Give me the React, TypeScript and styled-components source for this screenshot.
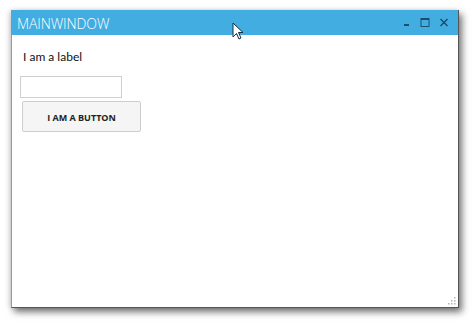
import styled, { createGlobalStyle } from 'styled-components'

const BLUE = '#41ade1'

const Global = createGlobalStyle`
  html, body { margin: 0; padding: 0; background: #fff; }
  body { width: 474px; height: 324px; overflow: hidden; }
`

const Stage = styled.div`
  position: relative;
  width: 474px;
  height: 324px;
  padding: 10px 0 0 11px;
  box-sizing: border-box;
  font-family: 'Open Sans', 'Noto Sans', sans-serif;
`

const Window = styled.div`
  position: relative;
  width: 448px;
  height: 298px;
  background: #fff;
  border-right: 1px solid #555;
  border-bottom: 1px solid #555;
  border-left: 1px solid #9a9a9a;
  box-sizing: border-box;
  display: flex;
  flex-direction: column;
  box-shadow: 3px 4px 7px rgba(0, 0, 0, 0.55), -2px 0 5px rgba(0, 0, 0, 0.12);
`

const TitleBar = styled.div`
  height: 25px;
  background: ${BLUE};
  display: flex;
  align-items: center;
  padding: 0 6px 0 6px;
  margin-left: -1px;
`

const Title = styled.div`
  flex: 1;
  color: #fff;
  font-size: 14px;
  font-weight: 300;
  letter-spacing: -0.1px;
  padding-top: 1px;
`

const Controls = styled.div`
  display: flex;
  align-items: center;
  gap: 9px;
  padding-right: 3px;
`

const Body = styled.div`
  flex: 1;
  display: flex;
  flex-direction: column;
  align-items: flex-start;
  padding: 14px 0 0 8px;
`

const Label = styled.div`
  font-family: Lato, 'Open Sans', sans-serif;
  font-size: 12px;
  color: #111;
  padding-left: 3px;
  line-height: 16px;
`

const TextBox = styled.div`
  margin-top: 11px;
  width: 102px;
  height: 22px;
  box-sizing: border-box;
  border: 1px solid #cfcfcf;
  background: #fff;
`

const Button = styled.div`
  margin: 3px 0 0 2px;
  width: 119px;
  height: 31px;
  box-sizing: border-box;
  border: 1px solid #cdcdcd;
  border-radius: 2px;
  background: #f5f5f5;
  display: flex;
  align-items: center;
  justify-content: center;
  font-size: 9px;
  font-weight: 700;
  color: #222;
  padding-top: 1px;
`

const Grip = styled.svg`
  position: absolute;
  right: 2px;
  bottom: 2px;
`

const Cursor = styled.svg`
  position: absolute;
  left: 232px;
  top: 22px;
`

export default function App() {
  return (
    <>
      <Global />
      <Stage>
        <Window>
          <TitleBar>
            <Title>MAINWINDOW</Title>
            <Controls>
              <svg width="8" height="9" viewBox="0 0 8 9">
                <rect x="1" y="6" width="5" height="2" fill="#1b4f6e" />
              </svg>
              <svg width="10" height="9" viewBox="0 0 10 9">
                <rect x="1" y="0.5" width="8" height="8" fill="none" stroke="#1b4f6e" strokeWidth="1" />
                <rect x="1" y="0.5" width="8" height="1.5" fill="#1b4f6e" />
              </svg>
              <svg width="10" height="9" viewBox="0 0 10 9">
                <path d="M1.5 1 L8.5 8 M8.5 1 L1.5 8" stroke="#1b4f6e" strokeWidth="1.5" />
              </svg>
            </Controls>
          </TitleBar>
          <Body>
            <Label>I am a label</Label>
            <TextBox />
            <Button>I AM A BUTTON</Button>
          </Body>
          <Grip width="10" height="10" viewBox="0 0 10 10">
            {[[8, 2], [8, 5], [5, 5], [8, 8], [5, 8], [2, 8]].map(([x, y], i) => (
              <rect key={i} x={x} y={y} width="1.5" height="1.5" fill="#b5b5b5" />
            ))}
          </Grip>
        </Window>
        <Cursor width="14" height="20" viewBox="0 0 14 20">
          <path d="M1 1 L1 15 L4.5 11.5 L7 17 L9 16 L6.5 10.5 L11 10.5 Z" fill="#fff" stroke="#1a2a3a" strokeWidth="1" strokeLinejoin="round" />
        </Cursor>
      </Stage>
    </>
  )
}
